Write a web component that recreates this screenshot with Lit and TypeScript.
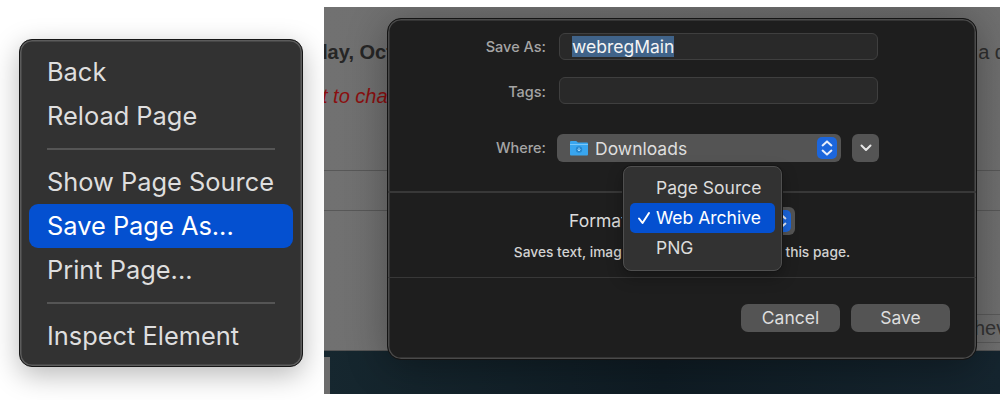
import { LitElement, html, css, svg } from "lit";
import { customElement } from "lit/decorators.js";

const stepper = svg`<svg class="stepper" viewBox="0 0 20 22"><rect width="20" height="22" rx="5" fill="#1c66dc"/><path d="M5.6 8.4 10 4.4l4.4 4M5.6 13.6l4.4 4 4.4-4" fill="none" stroke="#e8eefb" stroke-width="2" stroke-linecap="round" stroke-linejoin="round"/></svg>`;

@customElement("app-root")
export class AppRoot extends LitElement {
  static styles = css`
    :host { display: flex; width: 1000px; height: 400px; background: #fff; overflow: hidden; font-family: Inter, "Liberation Sans", sans-serif; }
    * { box-sizing: border-box; }
    .left { width: 324px; flex: none; padding: 39px 0 0 19px; }
    .ctx { width: 284px; height: 328px; padding: 10px 9px 0 9px; background: #323232; border-radius: 13px; border: 1px solid #161616;
      box-shadow: inset 0 0 0 1.5px #5c5c5c, 0 8px 28px rgba(0,0,0,.28); }
    .ctx .item { height: 44px; padding-left: 18px; font-size: 25.4px; line-height: 44px; color: #dedede; border-radius: 9px; white-space: nowrap; }
    .ctx .item.on { background: #0450d0; color: #fff; }
    .ctx .sep { height: 22px; display: flex; align-items: center; padding: 0 18px 0 18px; }
    .ctx .sep::after { content: ""; flex: 1; height: 2px; background: #555; }
    .right { position: relative; width: 676px; height: 387px; margin-top: 7px; background: linear-gradient(90deg,#717171,#6b6b6b 90%,#6f6f6f); overflow: hidden; display: flex; flex-direction: column; }
    .page { height: 344px; display: flex; flex-direction: column; font-family: "Liberation Sans", sans-serif; color: #262626; border-bottom: 1px solid #555; }
    .page .line1 { padding: 34px 0 0 0; height: 78px; font-size: 20px; font-weight: 700; line-height: 22px; display: flex; justify-content: space-between; white-space: nowrap; }
    .page .line1 .plain { font-weight: 400; color: #2e2e2e; margin-right: -6px; }
    .page .line1 .lead { margin-left: -8.6px; }
    .page .line2 { font-size: 20px; font-style: italic; color: #8b0f0f; line-height: 22px; height: 85px; white-space: nowrap; padding-left: 0; }
    .page .line2 span { margin-left: -2px; display: inline-block; }
    .page .rule { height: 41px; border-top: 1px solid #585858; border-bottom: 1px solid #585858; flex: none; }
    .page .hev { position: absolute; left: 640px; top: 307px; width: 42px; height: 29px; border: 1px solid #5a5a5a; font-size: 20px; line-height: 27px; color: #333; overflow: hidden; padding-left: 9px; }
    .foot { flex: 1; background:
      linear-gradient(#16272f,#16272f) 0 0/6px 6px no-repeat,
      linear-gradient(#6c6c6c,#6c6c6c) 0 0/6px 100% no-repeat,
      linear-gradient(90deg,#16272f,#0f1c24 50%,#15252f); }
    .dialog { position: absolute; left: 63px; top: 11px; width: 590px; height: 342px; background: #1e1e1e; border-radius: 14px; border: 1px solid #141414;
      box-shadow: inset 0 0 0 1.5px #4a4a4a, 0 6px 40px rgba(0,0,0,.32); color: #dcdcdc; display: flex; flex-direction: column; padding: 14px 0 0 0; }
    .form { display: grid; grid-template-columns: 158px 319px 38px; column-gap: 13px; align-items: center; grid-template-rows: 27px 27px 41px; row-gap: 17px; height: 158px; }
    .form .r3 { align-self: end; }
    .lbl { text-align: right; font-size: 14.5px; color: #a5a5a5; font-weight: 500; white-space: nowrap; }
    .lbl.r3 { line-height: 28px; }
    .lbl.tags { padding-top: 2px; }
    .field { height: 27px; background: #292929; border: 1px solid #3f3f3f; border-radius: 6px; padding-left: 12px; font-size: 17.5px; display: flex; align-items: center; }
    .sel { background: #406389; color: #f4f4f4; height: 21px; line-height: 21px; }
    .where { height: 28px; background: #545454; border-radius: 6px; display: flex; align-items: center; gap: 6px; padding: 0 4px 0 12px; font-size: 17.5px; margin-left: -2px; width: 284px; color: #dedede; }
    .folder { width: 20px; height: 20px; flex: none; }
    .grow { flex: 1; }
    .stepper { width: 20px; height: 22px; flex: none; }
    .chev { width: 27px; height: 28px; background: #545454; border-radius: 6px; display: flex; align-items: center; justify-content: center; margin-left: -39px; }
    .chev svg { width: 12px; height: 8px; }
    .sep2 { height: 1.5px; background: #383838; flex: none; }
    .fmt { height: 84px; display: flex; flex-direction: column; align-items: center; flex: none; }
    .fmtrow { display: flex; align-items: center; gap: 6px; margin-top: 14px; height: 28px; }
    .fmtrow .t { font-size: 17.5px; color: #dcdcdc; }
    .fmtbtn { width: 157px; height: 28px; background: #545454; border-radius: 6px; display: flex; align-items: center; justify-content: flex-end; padding-right: 4px; }
    .desc { margin-top: 6px; font-size: 13.75px; font-weight: 500; line-height: 22px; color: #d2d2d2; white-space: nowrap; }
    .btns { display: flex; justify-content: flex-end; gap: 11px; padding: 26px 26px 0 0; }
    .btn { width: 99px; height: 28px; background: #545454; border-radius: 7px; font-size: 17.5px; line-height: 28px; text-align: center; color: #dedede; }
    .pop { position: absolute; left: 299px; top: 159px; width: 159px; height: 105px; background: #323232; border-radius: 8px; border: 1px solid #4f4f4f; box-shadow: 0 0 0 1px #161616, 0 6px 16px rgba(0,0,0,.3); padding: 6px; }
    .pop .o { height: 30px; line-height: 30px; font-size: 17.5px; color: #dcdcdc; padding-left: 26px; border-radius: 5px; position: relative; white-space: nowrap; }
    .pop .o.on { background: #0450d0; color: #fff; }
    .pop .check { position: absolute; left: 7px; top: 8px; width: 14px; height: 14px; }
  `;

  render() {
    const ctx = ["Back", "Reload Page", null, "Show Page Source", "Save Page As...", "Print Page...", null, "Inspect Element"];
    return html`
      <div class="left">
        <div class="ctx">
          ${ctx.map((t) => t === null ? html`<div class="sep"></div>` : html`<div class="item ${t.startsWith("Save") ? "on" : ""}">${t}</div>`)}
        </div>
      </div>
      <div class="right">
        <div class="page">
          <div class="line1"><span class="lead">day, Oct</span><span class="plain">a d</span></div>
          <div class="line2"><span>t to change</span></div>
          <div class="rule"></div>
          <div class="hev">hev</div>
        </div>
        <div class="foot"></div>
        <div class="dialog">
          <div class="form">
            <div class="lbl">Save As:</div>
            <div class="field"><span class="sel">webregMain</span></div>
            <div></div>
            <div class="lbl tags">Tags:</div>
            <div class="field"></div>
            <div></div>
            <div class="lbl r3">Where:</div>
            <div class="where r3">
              <svg class="folder" viewBox="0 0 20 20"><path d="M1 4.200C1 3.400 1.500 3 2.200 3h4.600c.6 0 .9.200 1.200.6l.8 1h9c.7 0 1.200.5 1.200 1.200v10.400c0 .8-.5 1.300-1.200 1.300H2.200C1.500 17.500 1 17 1 16.200Z" fill="#39a5ee"/><path d="M1 6.500h18" stroke="#7cc8f7" stroke-width="1"/><circle cx="10" cy="11.500" r="3.200" fill="#2586cd"/><path d="M10 9.600v3.300M8.600 11.500l1.400 1.500 1.400-1.500" fill="none" stroke="#a9dbfb" stroke-width="1"/></svg>
              <span>Downloads</span><span class="grow"></span>${stepper}
            </div>
            <div class="chev r3"><svg viewBox="0 0 12 8"><path d="M1.500 1.500 6 6l4.500-4.500" fill="none" stroke="#e6e6e6" stroke-width="2" stroke-linecap="round" stroke-linejoin="round"/></svg></div>
          </div>
          <div class="sep2"></div>
          <div class="fmt">
            <div class="fmtrow"><span class="t">Format:</span><div class="fmtbtn">${stepper}</div></div>
            <div class="desc">Saves text, images, and other content on this page.</div>
          </div>
          <div class="sep2"></div>
          <div class="btns"><div class="btn">Cancel</div><div class="btn">Save</div></div>
        </div>
        <div class="pop">
          <div class="o">Page Source</div>
          <div class="o on"><svg class="check" viewBox="0 0 14 14"><path d="M2 7.500 5.500 12 12 2" fill="none" stroke="#fff" stroke-width="2" stroke-linecap="round" stroke-linejoin="round"/></svg>Web Archive</div>
          <div class="o">PNG</div>
        </div>
      </div>
    `;
  }
}
